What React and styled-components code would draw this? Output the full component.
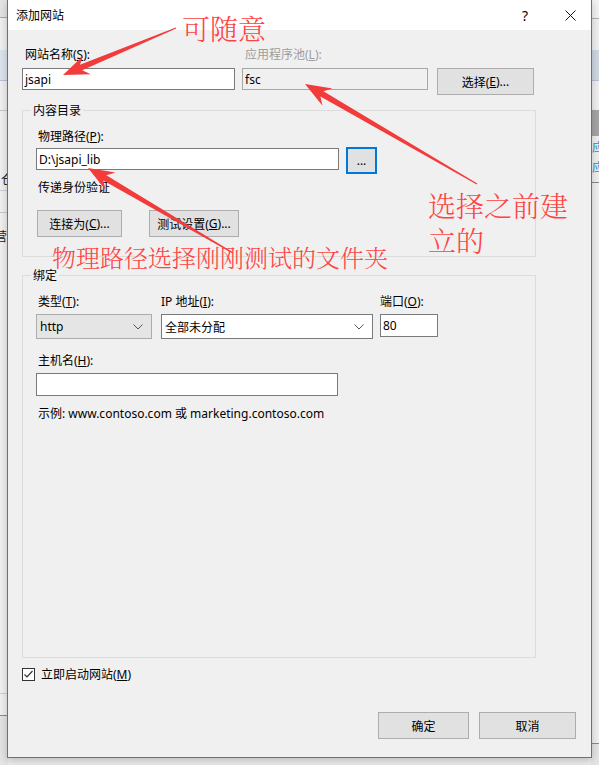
import React from "react";
import styled, { createGlobalStyle } from "styled-components";

const GlobalStyle = createGlobalStyle`
  html, body {
    margin: 0;
    padding: 0;
    background: #e9e9e9;
  }
  body {
    font-family: "Noto Sans", "Noto Sans CJK SC", sans-serif;
    font-size: 12px;
    color: #000;
  }
`;

const Desktop = styled.div`
  position: relative;
  width: 599px;
  height: 765px;
  overflow: hidden;
  background: #ebebeb;
`;

// bits of the windows behind the dialog
const Strip = styled.div`
  position: absolute;
  top: 0;
  bottom: 0;
  left: ${(p) => p.left}px;
  width: ${(p) => p.width}px;
  overflow: hidden;
  background: #f0f0f0;
`;

const Band = styled.div`
  position: absolute;
  left: 0;
  right: 0;
  top: ${(p) => p.top}px;
  height: ${(p) => p.height}px;
  background: ${(p) => p.color};
`;

const Peek = styled.span`
  position: absolute;
  top: ${(p) => p.top}px;
  left: ${(p) => p.left}px;
  font-size: 12px;
  line-height: 14px;
  color: ${(p) => p.color || "#222"};
`;

const Dialog = styled.div`
  position: relative;
  margin-left: 7px;
  width: 585px;
  height: 758px;
  box-sizing: border-box;
  border: 1px solid #707070;
  border-top: none;
  background: #f0f0f0;
  display: flex;
  flex-direction: column;
  box-shadow: 0 2px 8px rgba(0, 0, 0, 0.22);
`;

const TitleBar = styled.div`
  height: 30px;
  background: #fff;
  display: flex;
  align-items: center;
  padding-left: 8px;
`;

const Title = styled.span`
  flex: 1;
  font-size: 12px;
`;

const TitleIcon = styled.span`
  width: ${(p) => p.width}px;
  display: flex;
  justify-content: center;
  align-items: center;
  font-size: 14px;
`;

const Body = styled.div`
  flex: 1;
  display: flex;
  flex-direction: column;
  padding: 17px 0 18px 14px;
`;

const Row = styled.div`
  display: flex;
  align-items: flex-start;
  gap: ${(p) => p.gap || 0}px;
  margin-top: ${(p) => p.mt || 0}px;
`;

const Field = styled.div`
  display: flex;
  flex-direction: column;
  width: ${(p) => p.width}px;
  margin-left: ${(p) => p.ml || 0}px;
  margin-top: ${(p) => p.mt || 0}px;
`;

const Label = styled.label`
  line-height: 16px;
  height: 16px;
  padding-left: ${(p) => (p.pl === undefined ? 2 : p.pl)}px;
  margin-top: ${(p) => p.mt || 0}px;
  margin-bottom: ${(p) => p.mb || 5}px;
  color: ${(p) => (p.disabled ? "#9d9d9d" : "#000")};
  white-space: nowrap;
`;

const Text = styled.div`
  line-height: 16px;
  padding-left: 2px;
  margin-top: ${(p) => p.mt || 0}px;
  white-space: nowrap;
`;

const TextBox = styled.div`
  box-sizing: border-box;
  height: ${(p) => p.height || 22}px;
  width: ${(p) => (p.width ? p.width + "px" : "100%")};
  border: 1px solid ${(p) => (p.disabled ? "#a8a8a8" : "#7a7a7a")};
  background: ${(p) => (p.disabled ? "#f0f0f0" : "#fff")};
  padding-left: 2px;
  display: flex;
  align-items: center;
  font-size: 12px;
`;

const Select = styled.div`
  box-sizing: border-box;
  height: 25px;
  width: ${(p) => p.width}px;
  border: 1px solid ${(p) => (p.flat ? "#acacac" : "#7a7a7a")};
  background: ${(p) => (p.flat ? "#e5e5e5" : "#fff")};
  display: flex;
  align-items: center;
  justify-content: space-between;
  padding: 0 8px 0 3px;
`;

const Button = styled.div`
  box-sizing: border-box;
  width: ${(p) => p.width}px;
  height: 27px;
  margin-top: ${(p) => p.mt || 0}px;
  margin-left: ${(p) => p.ml || 0}px;
  border: ${(p) => (p.focused ? "2px solid #0078d7" : "1px solid #adadad")};
  background: #e1e1e1;
  display: flex;
  align-items: center;
  justify-content: center;
  white-space: nowrap;
`;

const Group = styled.div`
  box-sizing: border-box;
  width: 514px;
  height: ${(p) => p.height}px;
  margin-top: ${(p) => p.mt}px;
  border: 1px solid #dcdcdc;
  padding: 0 0 0 13px;
  display: flex;
  flex-direction: column;
`;

const Legend = styled.span`
  align-self: flex-start;
  margin: -8px 0 0 -5px;
  padding: 0 2px;
  height: 16px;
  line-height: 16px;
  background: #f0f0f0;
`;

const CheckRow = styled.div`
  display: flex;
  align-items: center;
  gap: 6px;
  margin-top: 7px;
`;

const CheckBox = styled.div`
  box-sizing: border-box;
  width: 13px;
  height: 13px;
  border: 1px solid #333;
  background: #fff;
  display: flex;
  align-items: center;
  justify-content: center;
`;

const Footer = styled.div`
  margin-top: auto;
  margin-right: 15px;
  display: flex;
  justify-content: flex-end;
  gap: 10px;
`;

const Overlay = styled.svg`
  position: absolute;
  left: 0;
  top: 0;
  pointer-events: none;
`;

const Note = styled.div`
  position: absolute;
  left: ${(p) => p.left}px;
  top: ${(p) => p.top}px;
  font-family: "Noto Serif CJK SC", "Noto Sans CJK SC", serif;
  font-weight: 300;
  font-size: ${(p) => p.size}px;
  line-height: ${(p) => p.lh || p.size}px;
  color: #ff4343;
  white-space: nowrap;
`;

function Chevron() {
  return (
    <svg width="10" height="6" viewBox="0 0 10 6">
      <polyline points="0.5,0.5 5,5 9.5,0.5" fill="none" stroke="#555" strokeWidth="1" />
    </svg>
  );
}

function arrow(tail, tip, headLen = 26, headW = 20, shaftW = 6) {
  const dx = tip[0] - tail[0];
  const dy = tip[1] - tail[1];
  const len = Math.hypot(dx, dy);
  const ux = dx / len;
  const uy = dy / len;
  const nx = -uy;
  const ny = ux;
  const neck = [tip[0] - ux * headLen * 0.75, tip[1] - uy * headLen * 0.75];
  const back = [tip[0] - ux * headLen, tip[1] - uy * headLen];
  const p = (x, y) => `${x.toFixed(1)},${y.toFixed(1)}`;
  return [
    p(tail[0] + nx * 0.5, tail[1] + ny * 0.5),
    p(neck[0] + nx * shaftW / 2, neck[1] + ny * shaftW / 2),
    p(back[0] + nx * headW / 2, back[1] + ny * headW / 2),
    p(tip[0], tip[1]),
    p(back[0] - nx * headW / 2, back[1] - ny * headW / 2),
    p(neck[0] - nx * shaftW / 2, neck[1] - ny * shaftW / 2),
    p(tail[0] - nx * 0.5, tail[1] - ny * 0.5),
  ].join(" ");
}

export default function App() {
  return (
    <>
      <GlobalStyle />
      <Desktop>
        <Strip left={0} width={8}>
          <Band top={0} height={17} color="#e4e4e4" />
          <Band top={17} height={1} color="#a9a9a9" />
          <Band top={50} height={30} color="#dde4ee" />
          <Band top={80} height={1} color="#b8c3d3" />
          <Band top={110} height={1} color="#c8c8c8" />
          <Peek top={173} left={1}>仓</Peek>
          <Band top={190} height={1} color="#d0d0d0" />
          <Band top={212} height={1} color="#c8c8c8" />
          <Peek top={230} left={-5}>营</Peek>
          <Band top={693} height={1} color="#d0d0d0" />
          <Band top={715} height={1} color="#8a8a8a" />
          <Band top={716} height={49} color="#e4e4e4" />
        </Strip>
        <Strip left={591} width={8}>
          <Band top={0} height={17} color="#f3f3f3" />
          <Band top={18} height={1} color="#b0b0b0" />
          <Band top={50} height={30} color="#cfd8e3" />
          <Band top={80} height={1} color="#b8c3d3" />
          <Band top={110} height={26} color="#a5a5a5" />
          <Peek top={141} left={1} color="#2f8ad6">应</Peek>
          <Peek top={161} left={1} color="#2f8ad6">应</Peek>
          <Band top={182} height={1} color="#8a8a8a" />
          <Band top={743} height={1} color="#8a8a8a" />
          <Band top={744} height={21} color="#e4e4e4" />
        </Strip>

        <Dialog>
          <TitleBar>
            <Title>添加网站</Title>
            <TitleIcon width={24}>?</TitleIcon>
            <TitleIcon width={22} style={{ marginLeft: 22, marginRight: 10 }}>
              <svg width="11" height="11" viewBox="0 0 11 11">
                <path d="M0.5 0.5 L10.5 10.5 M10.5 0.5 L0.5 10.5" stroke="#111" strokeWidth="1" />
              </svg>
            </TitleIcon>
          </TitleBar>

          <Body>
            <Row>
              <Field width={213}>
                <Label pl={3}>网站名称(<u>S</u>):</Label>
                <TextBox>jsapi</TextBox>
              </Field>
              <Field width={186} ml={7}>
                <Label disabled pl={3}>应用程序池(<u>L</u>):</Label>
                <TextBox disabled>fsc</TextBox>
              </Field>
              <Button width={97} ml={9} mt={21}>
                选择(<u>E</u>)...
              </Button>
            </Row>

            <Group height={147} mt={15}>
              <Legend>内容目录</Legend>
              <Label mb={3} mt={10}>物理路径(<u>P</u>):</Label>
              <Row gap={7}>
                <TextBox width={303}>D:\jsapi_lib</TextBox>
                <Button width={31} mt={-1} focused>...</Button>
              </Row>
              <Text mt={6}>传递身份验证</Text>
              <Row gap={27} mt={14}>
                <Button width={85} ml={1}>连接为(<u>C</u>)...</Button>
                <Button width={90}>测试设置(<u>G</u>)...</Button>
              </Row>
            </Group>

            <Group height={383} mt={18}>
              <Legend>绑定</Legend>
              <Row mt={10}>
                <Field width={116}>
                  <Label mb={4}>类型(<u>T</u>):</Label>
                  <Select width={116} flat>
                    <span>http</span>
                    <Chevron />
                  </Select>
                </Field>
                <Field width={212} ml={9}>
                  <Label mb={4} pl={0}>IP 地址(<u>I</u>):</Label>
                  <Select width={212}>
                    <span>全部未分配</span>
                    <Chevron />
                  </Select>
                </Field>
                <Field width={58} ml={7}>
                  <Label mb={4} pl={0}>端口(<u>O</u>):</Label>
                  <TextBox height={23}>80</TextBox>
                </Field>
              </Row>
              <Field width={302} mt={14}>
                <Label mb={4}>主机名(<u>H</u>):</Label>
                <TextBox height={23}>&nbsp;</TextBox>
              </Field>
              <Text mt={10}>示例: www.contoso.com 或 marketing.contoso.com</Text>
            </Group>

            <CheckRow>
              <CheckBox>
                <svg width="11" height="11" viewBox="0 0 11 11">
                  <polyline points="1.5,5.5 4,8 9.5,2" fill="none" stroke="#333" strokeWidth="1.2" />
                </svg>
              </CheckBox>
              <span>立即启动网站(<u>M</u>)</span>
            </CheckRow>

            <Footer>
              <Button width={91}>确定</Button>
              <Button width={97}>取消</Button>
            </Footer>
          </Body>
        </Dialog>

        <Overlay width="599" height="765" viewBox="0 0 599 765">
          <polygon points={arrow([176, 28], [63, 75])} fill="#f23b3b" />
          <polygon points={arrow([477, 184], [305, 84])} fill="#f23b3b" />
          <polygon points={arrow([233, 253], [88, 168])} fill="#f23b3b" />
        </Overlay>
        <Note left={182} top={14} size={28}>可随意</Note>
        <Note left={428} top={188} size={28} lh={35}>
          选择之前建
          <br />
          立的
        </Note>
        <Note left={52} top={245} size={24}>物理路径选择刚刚测试的文件夹</Note>
      </Desktop>
    </>
  );
}
